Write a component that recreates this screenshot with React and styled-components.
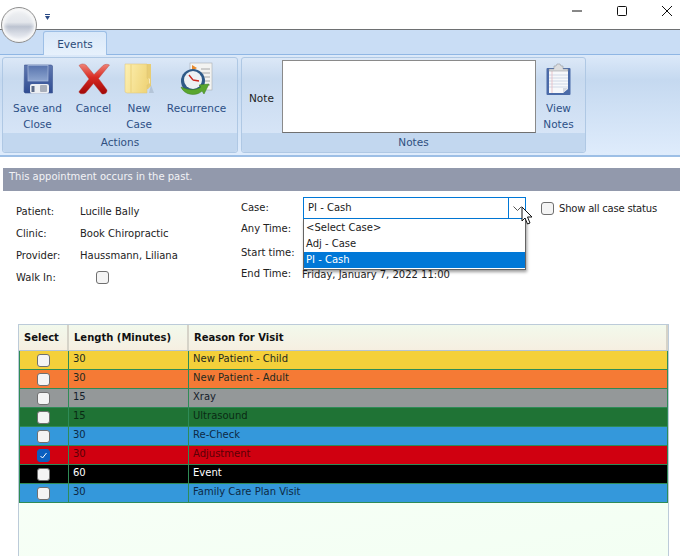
import React from 'react'
import styled, { createGlobalStyle } from 'styled-components'

const GlobalStyle = createGlobalStyle`
  html, body {
    margin: 0;
    padding: 0;
    background: #fff;
  }
  body {
    font-family: "DejaVu Sans", "Liberation Sans", sans-serif;
    font-size: 10px;
  }
`

const Page = styled.div`
  width: 680px;
  height: 556px;
  overflow: hidden;
  position: relative;
  background: #fff;
  color: #1a1a1a;
`

const TitleBar = styled.div`
  height: 29px;
  background: #fff;
  border-bottom: 1px solid #6e7072;
  display: flex;
  align-items: flex-start;
`

const OrbSlot = styled.div`
  width: 45px;
  flex: none;
  position: relative;
`

const Orb = styled.div`
  position: absolute;
  left: 1px;
  top: 7px;
  width: 36px;
  height: 36px;
  box-sizing: border-box;
  border-radius: 50%;
  border: 1px solid #8f8f8f;
  box-shadow: inset 0 0 0 1.5px #f4f4f4, inset 0 0 4px 2px #fff;
  background: linear-gradient(180deg, #f1f2f4 0%, #e3e6eb 42%, #bcc3d0 55%, #d9dde6 75%, #f3f4f8 100%);
  z-index: 3;
`

const QuickMenu = styled.svg`
  margin-top: 14px;
  display: block;
`

const WindowButtons = styled.div`
  margin-left: auto;
  display: flex;
  align-items: center;
  height: 22px;
  padding-right: 8px;
  gap: 35px;
`

const RibbonTabs = styled.div`
  height: 25px;
  background: #c9ddf5;
  border-bottom: 1px solid #8fb6e4;
  box-sizing: border-box;
  padding: 2px 0 0 43px;
  display: flex;
  align-items: flex-end;
`

const Tab = styled.div`
  width: 64px;
  height: 24px;
  box-sizing: border-box;
  margin-bottom: -1px;
  background: linear-gradient(180deg, #d9e8f9 0%, #e7f1fc 100%);
  border: 1px solid #9dbfe6;
  border-bottom: none;
  border-radius: 3px 3px 0 0;
  color: #2a4a78;
  font-size: 10.5px;
  display: flex;
  align-items: center;
  justify-content: center;
`

const Ribbon = styled.div`
  height: 102px;
  box-sizing: border-box;
  padding: 2px 0 0 2px;
  display: flex;
  gap: 3px;
  background: linear-gradient(180deg, #dce9f9 0%, #c5d9f0 25%, #dfecfc 100%);
  border-bottom: 2px solid #9dbfe6;
`

const Group = styled.section`
  width: ${p => p.$width}px;
  height: 96px;
  box-sizing: border-box;
  border: 1px solid #afc8e4;
  border-radius: 3px;
  display: flex;
  flex-direction: column;
  background: linear-gradient(180deg, #dce8f7 0%, #c8daef 22%, #dbe8f9 100%);
`

const GroupBody = styled.div`
  height: 75px;
  flex: none;
  display: flex;
  align-items: flex-start;
`

const GroupLabel = styled.div`
  flex: 1;
  padding-bottom: 1px;
  background: #c2d7ef;
  color: #2f4f7f;
  font-size: 10.5px;
  display: flex;
  align-items: center;
  justify-content: center;
  border-radius: 0 0 3px 3px;
`

const RibbonButton = styled.div`
  width: ${p => p.$width}px;
  flex: none;
  display: flex;
  flex-direction: column;
  align-items: center;
  padding-top: 4px;
  color: #2c4f86;
  font-size: 10.5px;
  line-height: 16px;
  text-align: center;
  white-space: nowrap;
`

const IconSlot = styled.div`
  height: 34px;
  margin-bottom: 4px;
  display: flex;
  align-items: center;
  justify-content: center;
`

const NoteLabel = styled.div`
  width: 40px;
  flex: none;
  padding-top: 34px;
  padding-left: 7px;
  box-sizing: border-box;
  color: #1f1f1f;
  font-size: 10.5px;
`

const NoteBox = styled.div`
  width: 254px;
  height: 73px;
  flex: none;
  box-sizing: border-box;
  margin-top: 2px;
  background: #fff;
  border: 1px solid #8a8a8a;
  border-bottom-color: #707070;
`

const Banner = styled.div`
  height: 23px;
  margin: 11px 0 0 3px;
  padding-left: 6px;
  background: #9299ac;
  color: #f2f3f6;
  font-size: 10px;
  line-height: 17px;
`

const Form = styled.div`
  position: relative;
  height: 133px;
  display: grid;
  grid-template-columns: 241px 1fr;
`

const PatientInfo = styled.div`
  padding: 9px 0 0 16px;
  display: grid;
  grid-template-columns: 64px 1fr;
  grid-auto-rows: 22px;
  align-items: center;
`

const FieldLabel = styled.div`
  font-size: 10px;
  color: #222;
`

const CaseLabel = styled(FieldLabel)`
  margin-bottom: 2px;
`

const FieldValue = styled.div`
  font-size: 10px;
  color: #222;
`

const EndValue = styled(FieldValue)`
  margin: 2px 0 0 -1px;
`

const Check = styled.span`
  display: flex;
  align-items: center;
  justify-content: center;
  box-sizing: border-box;
  width: 13px;
  height: 13px;
  border-radius: 3px;
  border: 1px solid ${p => (p.$checked ? '#0a5fc0' : '#6f6f6f')};
  background: ${p => (p.$checked ? '#0a5fc0' : '#f4f4f4')};
`

const WalkCheck = styled(Check)`
  margin-left: 16px;
`

const CaseArea = styled.div`
  position: relative;
  padding-top: 6px;
  display: grid;
  grid-template-columns: 62px 1fr;
  grid-template-rows: 22px 19px 29px 13px;
  align-items: center;
`

const ComboRow = styled.div`
  display: flex;
  align-items: center;
`

const Combo = styled.div`
  width: 223px;
  height: 22px;
  box-sizing: border-box;
  border: 1px solid #0078d7;
  background: #fff;
  display: flex;
  align-items: center;
  padding-left: 4px;
  font-size: 10px;
`

const ComboText = styled.span`
  margin-bottom: 2px;
`

const ComboArrow = styled.div`
  margin-left: auto;
  width: 16px;
  height: 100%;
  border-left: 1px solid #0078d7;
  display: flex;
  align-items: center;
  justify-content: center;
`

const ShowAll = styled.div`
  margin-left: 15px;
  display: flex;
  align-items: center;
  gap: 5px;
  font-size: 10px;
  letter-spacing: -0.2px;
  color: #222;
`

const Dropdown = styled.ul`
  position: absolute;
  left: 62px;
  top: 28px;
  width: 223px;
  box-sizing: border-box;
  margin: 0;
  padding: 1px 0 1px;
  list-style: none;
  background: #fff;
  border: 1px solid #646464;
  border-top: none;
  box-shadow: 1px 2px 3px rgba(0, 0, 0, 0.4);
  z-index: 4;
`

const DropdownItem = styled.li`
  height: 16px;
  line-height: 15px;
  padding-left: 2px;
  font-size: 10px;
  background: ${p => (p.$active ? '#0078d7' : 'transparent')};
  color: ${p => (p.$active ? '#fff' : '#222')};
`

const Cursor = styled.svg`
  position: absolute;
  left: 280px;
  top: 15px;
  z-index: 5;
`

const GridPanel = styled.div`
  margin: 0 11px 0 18px;
  height: 232px;
  box-sizing: border-box;
  border: 1px solid #bccbd9;
  border-bottom: none;
  background: linear-gradient(170deg, #fbfffa 0%, #f3fff3 100%);
`

const GridHeader = styled.div`
  height: 25px;
  display: grid;
  grid-template-columns: 50px 120px 1fr;
  border-bottom: 1px solid #b5c4d2;
`

const HeaderCell = styled.div`
  box-sizing: border-box;
  padding-left: 5px;
  display: flex;
  align-items: center;
  font-size: 10px;
  font-weight: 700;
  color: #111;
  background: linear-gradient(180deg, #f2f9ec 0%, #f6efe1 100%);
  border-right: 2px solid #d6d3c8;
`

const Row = styled.div`
  height: 19px;
  box-sizing: border-box;
  display: grid;
  grid-template-columns: 49px 120px 1fr;
  background: ${p => p.$bg};
  color: ${p => p.$fg};
  border-bottom: 1px solid #2e8b57;
  border-left: 1px solid #2e8b57;
  border-right: 1px solid #2e8b57;
`

const SelectCell = styled.div`
  display: flex;
  align-items: center;
  justify-content: center;
  border-right: 1px solid #2e8b57;
  padding-right: 1px;
`

const LengthCell = styled.div`
  display: flex;
  align-items: center;
  padding: 0 0 3px 4px;
  font-size: 10px;
  border-right: 1px solid #2e8b57;
`

const ReasonCell = styled.div`
  display: flex;
  align-items: center;
  padding: 0 0 3px 4px;
  font-size: 10px;
`

const rows = [
  { length: 30, reason: 'New Patient - Child', bg: '#f4d03a', fg: '#1e2a20' },
  { length: 30, reason: 'New Patient - Adult', bg: '#f57a35', fg: '#1e2a20' },
  { length: 15, reason: 'Xray', bg: '#949899', fg: '#14202a' },
  { length: 15, reason: 'Ultrasound', bg: '#1f7335', fg: '#0a2a14' },
  { length: 30, reason: 'Re-Check', bg: '#3498db', fg: '#0d2a45' },
  { length: 30, reason: 'Adjustment', bg: '#d00010', fg: '#5a0006', checked: true },
  { length: 60, reason: 'Event', bg: '#000', fg: '#fff' },
  { length: 30, reason: 'Family Care Plan Visit', bg: '#3498db', fg: '#0d2a45' },
]

const SaveIcon = () => (
  <svg width="30" height="30" viewBox="0 0 30 30">
    <defs>
      <linearGradient id="disk" x1="0" y1="0" x2="0" y2="1">
        <stop offset="0" stopColor="#5f78b0" />
        <stop offset="1" stopColor="#2f4c92" />
      </linearGradient>
      <linearGradient id="diskLabel" x1="0" y1="0" x2="0" y2="1">
        <stop offset="0" stopColor="#5874ae" />
        <stop offset="1" stopColor="#8da5cf" />
      </linearGradient>
    </defs>
    <path d="M1.500 1h27l1 1v27H2l-1-1z" fill="url(#disk)" stroke="#3c5690" strokeWidth="0.6" />
    <rect x="5" y="1.500" width="20" height="15.500" fill="url(#diskLabel)" stroke="#a9bbdc" strokeWidth="0.7" />
    <rect x="7" y="20" width="19" height="9.500" rx="2" fill="#eceef2" />
    <rect x="17" y="21" width="7" height="7" rx="1" fill="#a9afbb" />
    <rect x="8.500" y="22" width="3" height="6" fill="#5c6b88" />
  </svg>
)

const CancelIcon = () => (
  <svg width="32" height="32" viewBox="0 0 32 32">
    <defs>
      <linearGradient id="cross" x1="0" y1="0" x2="0" y2="1">
        <stop offset="0" stopColor="#ef8478" />
        <stop offset="0.45" stopColor="#d82a22" />
        <stop offset="1" stopColor="#a00808" />
      </linearGradient>
    </defs>
    <path d="M1 2.500C3 .5 6 .5 8 2l8 9.500L25 2.500c2-1.500 5-1.500 6.500-.5L20.500 15.500 29 27c.5 2.500-2 4.500-5 4l-8.500-10.500L7.500 30c-3 1.500-6.500 1-6.500-1.500L11 16z" fill="url(#cross)" stroke="#b2453c" strokeWidth="0.4" />
  </svg>
)

const FolderIcon = () => (
  <svg width="30" height="32" viewBox="0 0 30 32">
    <defs>
      <linearGradient id="folder" x1="0" y1="0" x2="1" y2="0.3">
        <stop offset="0" stopColor="#fdf0b2" />
        <stop offset="1" stopColor="#f0d67c" />
      </linearGradient>
    </defs>
    <path d="M19 1h8v22l-3 3h-5z" fill="#e8cd74" />
    <path d="M24 17l1-2 1 2v3l-1 1z" fill="#fff6cf" />
    <path d="M1 1h22v14l2 2v4l-2 1v8H3l-2-1z" fill="url(#folder)" stroke="#dcc274" strokeWidth="0.5" />
    <path d="M7 1.500v28" stroke="#e4c86e" strokeWidth="0.7" />
    <path d="M25 30l2-8 3 8z" fill="#9aa9ba" opacity="0.45" />
  </svg>
)

const RecurrenceIcon = () => (
  <svg width="34" height="34" viewBox="0 0 34 34">
    <rect x="10" y="1" width="22" height="27" fill="#f3f3f1" stroke="#a9adb3" strokeWidth="0.6" />
    <path d="M12 3l5 3-5 3z" fill="#e88a2c" />
    <path d="M21 7h9M21 11h9M23 15h7M25 19h5M25 23h5" stroke="#a8a8a8" strokeWidth="1" />
    <circle cx="13" cy="19" r="12" fill="#2f5a88" />
    <circle cx="13" cy="18" r="9" fill="#edf1f5" />
    <path d="M13 18l-4-5M13 18l6 1" stroke="#c9281f" strokeWidth="1.3" />
    <path d="M1 25c3 8 15 10 21 4l2 3 5-10-10 1 2 2c-6 4-13 3-20 0z" fill="#5aa62e" stroke="#3b7d1c" strokeWidth="0.5" />
  </svg>
)

const ClipboardIcon = () => (
  <svg width="25" height="33" viewBox="0 0 25 33">
    <rect x="0.500" y="5" width="24" height="27" rx="1" fill="#4a6aa8" />
    <path d="M3 8h19v18l-5 4H3z" fill="#f7f8fb" />
    <path d="M3 12h19M3 15h19M3 18h19M3 21h19M3 24h19" stroke="#c5cfe2" strokeWidth="0.8" />
    <path d="M6 8v22" stroke="#e9b9c0" strokeWidth="0.8" />
    <path d="M8 3h2l1-2h3l1 2h2v3h5v2H3V6h5z" fill="#dcdddf" stroke="#8b8d90" strokeWidth="0.5" />
    <path d="M17 30l5-5h-5z" fill="#d5d9e2" />
  </svg>
)

const Tick = () => (
  <svg width="9" height="9" viewBox="0 0 9 9">
    <path d="M1.500 5l2 2 4-5" fill="none" stroke="#fff" strokeWidth="1" />
  </svg>
)

const App = () => (
  <Page>
    <GlobalStyle />
    <TitleBar>
      <OrbSlot>
        <Orb />
      </OrbSlot>
      <QuickMenu width="6" height="7" viewBox="0 0 6 7">
        <path d="M0 0h5v1H0zM0 2h5L2.500 6z" fill="#2b4a86" />
      </QuickMenu>
      <WindowButtons>
        <svg width="10" height="10" viewBox="0 0 10 10">
          <path d="M0 5h10" stroke="#111" />
        </svg>
        <svg width="10" height="10" viewBox="0 0 10 10">
          <rect x="0.500" y="0.500" width="9" height="9" rx="1" fill="none" stroke="#111" />
        </svg>
        <svg width="10" height="10" viewBox="0 0 10 10">
          <path d="M0 0l10 10M10 0L0 10" stroke="#111" />
        </svg>
      </WindowButtons>
    </TitleBar>
    <RibbonTabs>
      <Tab>Events</Tab>
    </RibbonTabs>
    <Ribbon>
      <Group $width={236}>
        <GroupBody>
          <RibbonButton $width={69}>
            <IconSlot><SaveIcon /></IconSlot>
            Save and
            <br />
            Close
          </RibbonButton>
          <RibbonButton $width={43}>
            <IconSlot><CancelIcon /></IconSlot>
            Cancel
          </RibbonButton>
          <RibbonButton $width={48}>
            <IconSlot><FolderIcon /></IconSlot>
            New
            <br />
            Case
          </RibbonButton>
          <RibbonButton $width={67}>
            <IconSlot><RecurrenceIcon /></IconSlot>
            Recurrence
          </RibbonButton>
        </GroupBody>
        <GroupLabel>Actions</GroupLabel>
      </Group>
      <Group $width={345}>
        <GroupBody>
          <NoteLabel>Note</NoteLabel>
          <NoteBox />
          <RibbonButton $width={45}>
            <IconSlot><ClipboardIcon /></IconSlot>
            View
            <br />
            Notes
          </RibbonButton>
        </GroupBody>
        <GroupLabel>Notes</GroupLabel>
      </Group>
    </Ribbon>
    <Banner>This appointment occurs in the past.</Banner>
    <Form>
      <PatientInfo>
        <FieldLabel>Patient:</FieldLabel>
        <FieldValue>Lucille Bally</FieldValue>
        <FieldLabel>Clinic:</FieldLabel>
        <FieldValue>Book Chiropractic</FieldValue>
        <FieldLabel>Provider:</FieldLabel>
        <FieldValue>Haussmann, Liliana</FieldValue>
        <FieldLabel>Walk In:</FieldLabel>
        <WalkCheck />
      </PatientInfo>
      <CaseArea>
        <CaseLabel>Case:</CaseLabel>
        <ComboRow>
          <Combo>
            <ComboText>PI - Cash</ComboText>
            <ComboArrow>
              <svg width="9" height="5" viewBox="0 0 9 5">
                <path d="M0.500 0.500l4 4 4-4" fill="none" stroke="#555" />
              </svg>
            </ComboArrow>
          </Combo>
          <ShowAll>
            <Check />
            Show all case status
          </ShowAll>
        </ComboRow>
        <FieldLabel>Any Time:</FieldLabel>
        <div />
        <FieldLabel>Start time:</FieldLabel>
        <div />
        <FieldLabel>End Time:</FieldLabel>
        <EndValue>Friday, January 7, 2022 11:00</EndValue>
        <Dropdown>
          <DropdownItem>&lt;Select Case&gt;</DropdownItem>
          <DropdownItem>Adj - Case</DropdownItem>
          <DropdownItem $active>PI - Cash</DropdownItem>
        </Dropdown>
        <Cursor width="14" height="20" viewBox="0 0 14 20">
          <path d="M1 1v14l3-3 2.500 6 2.500-1-2.500-6h4.500z" fill="#fff" stroke="#111" strokeWidth="1" />
        </Cursor>
      </CaseArea>
    </Form>
    <GridPanel>
      <GridHeader>
        <HeaderCell>Select</HeaderCell>
        <HeaderCell>Length (Minutes)</HeaderCell>
        <HeaderCell>Reason for Visit</HeaderCell>
      </GridHeader>
      {rows.map(row => (
        <Row key={row.reason} $bg={row.bg} $fg={row.fg}>
          <SelectCell>
            <Check $checked={row.checked}>{row.checked && <Tick />}</Check>
          </SelectCell>
          <LengthCell>{row.length}</LengthCell>
          <ReasonCell>{row.reason}</ReasonCell>
        </Row>
      ))}
    </GridPanel>
  </Page>
)

export default App
